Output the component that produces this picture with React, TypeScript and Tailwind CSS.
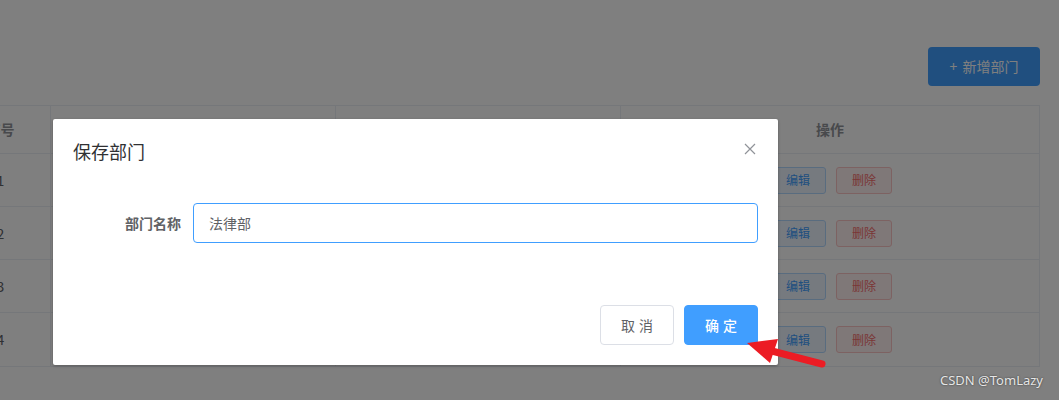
import React from 'react';

const rows = [
  { id: 1, name: '总经办', time: '2023-03-01 10:12:30' },
  { id: 2, name: '财务部', time: '2023-03-01 10:15:02' },
  { id: 3, name: '人事部', time: '2023-03-02 09:40:18' },
  { id: 4, name: '技术部', time: '2023-03-02 14:22:47' },
];

export default function App() {
  return (
    <div className="relative w-[1059px] h-[400px] overflow-hidden bg-white font-['Noto_Sans_CJK_SC','Liberation_Sans',sans-serif]">
      {/* Page under the mask */}
      <div className="flex flex-col pt-[47px] pr-[19px]">
        <div className="flex justify-end">
          <button className="h-[39px] w-[112px] rounded-[4px] bg-[#409eff] text-[14px] text-white flex items-center justify-center gap-[5px]">
            <span>+</span>
            <span>新增部门</span>
          </button>
        </div>

        <div className="mt-[19px] ml-[-50px] border border-[#ebeef5] text-[14px]">
          <div className="grid grid-cols-[100px_285px_285px_1fr] h-[48px] border-b border-[#ebeef5] font-bold text-[#909399]">
            <div className="flex items-center justify-center border-r border-[#ebeef5]">序号</div>
            <div className="flex items-center justify-center border-r border-[#ebeef5]">部门名称</div>
            <div className="flex items-center justify-center border-r border-[#ebeef5]">创建时间</div>
            <div className="flex items-center justify-center">操作</div>
          </div>
          {rows.map((r, i) => (
            <div
              key={r.id}
              className={`grid grid-cols-[100px_285px_285px_1fr] h-[53px] text-[#606266] ${i < rows.length - 1 ? 'border-b border-[#ebeef5]' : ''}`}
            >
              <div className="flex items-center justify-center border-r border-[#ebeef5]">{r.id}</div>
              <div className="flex items-center justify-center border-r border-[#ebeef5]">{r.name}</div>
              <div className="flex items-center justify-center border-r border-[#ebeef5]">{r.time}</div>
              <div className="flex items-center justify-center gap-[10px] pl-[2px]">
                <button className="h-[27px] w-[56px] rounded-[3px] border border-[#b3d8ff] bg-[#ecf5ff] text-[12px] text-[#409eff]">
                  编辑
                </button>
                <button className="h-[27px] w-[56px] rounded-[3px] border border-[#fbc4c4] bg-[#fef0f0] text-[12px] text-[#f56c6c]">
                  删除
                </button>
              </div>
            </div>
          ))}
        </div>
      </div>

      {/* Mask */}
      <div className="absolute inset-0 bg-black/50" />

      {/* Dialog */}
      <div className="absolute left-[53px] top-[119px] w-[725px] bg-white rounded-[2px] shadow-[0_1px_3px_rgba(0,0,0,0.3)]">
        <div className="flex items-center justify-between px-[20px] pt-[20px] pb-[10px]">
          <span className="text-[18px] leading-[24px] text-[#303133]">保存部门</span>
          <svg width="12" height="12" viewBox="0 0 12 12" className="mr-[2px] -mt-[4px]">
            <path d="M1 1 L11 11 M11 1 L1 11" stroke="#909399" strokeWidth="1.2" />
          </svg>
        </div>
        <div className="px-[20px] py-[30px]">
          <div className="flex items-center mb-[22px]">
            <label className="w-[120px] shrink-0 pr-[12px] text-right text-[14px] font-bold text-[#606266] whitespace-nowrap">
              部门名称
            </label>
            <div className="flex-1 h-[40px] rounded-[4px] border border-[#409eff] flex items-center px-[15px] text-[14px] text-[#606266]">
              法律部
            </div>
          </div>
        </div>
        <div className="flex justify-end gap-[10px] px-[20px] pt-[10px] pb-[20px]">
          <button className="h-[40px] w-[74px] rounded-[4px] border border-[#dcdfe6] bg-white text-[14px] text-[#606266] tracking-[4px] pl-[4px]">
            取消
          </button>
          <button className="h-[40px] w-[74px] rounded-[4px] border border-[#409eff] bg-[#409eff] text-[14px] font-medium text-white tracking-[4px] pl-[4px]">
            确定
          </button>
        </div>
      </div>

      {/* Red annotation arrow */}
      <svg className="absolute inset-0 pointer-events-none" width="1059" height="400">
        <line x1="768" y1="350" x2="822" y2="364" stroke="#ec1c24" strokeWidth="7" strokeLinecap="round" />
        <polygon points="747,343 778,339 770,363" fill="#ec1c24" />
      </svg>

      {/* Watermark */}
      <div className="absolute right-[16px] bottom-[10px] text-[13px] text-[#e6e6e6] [text-shadow:0_0_2px_rgba(0,0,0,0.6)] font-['Noto_Sans','Liberation_Sans',sans-serif]">
        CSDN @TomLazy
      </div>
    </div>
  );
}
